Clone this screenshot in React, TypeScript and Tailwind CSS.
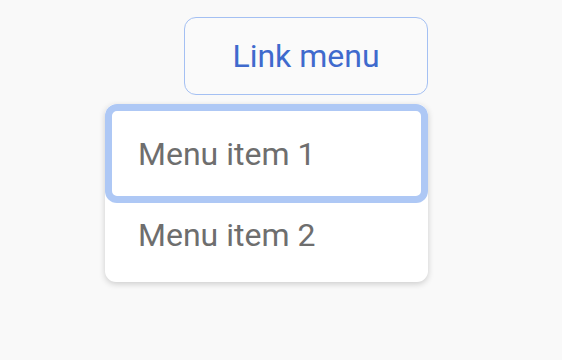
export default function App() {
  return (
    <div className="h-screen w-full bg-[#f9f9f9] pt-[17px] pl-[105px]" style={{ fontFamily: 'Roboto, "Liberation Sans", sans-serif' }}>
      <div className="flex w-[323px] flex-col items-end">
        {/* Trigger */}
        <button className="flex h-[78px] w-[244px] items-center justify-center rounded-[12px] border border-[#a4c0f3] bg-[#fafafa] text-[32px] text-[#3f6acd]">
          Link menu
        </button>

        {/* Menu */}
        <div className="mt-[9px] flex w-full flex-col rounded-[11px] bg-white pb-[15px] shadow-[0_2px_6px_rgba(0,0,0,0.18)]">
          <div className="flex h-[99px] items-center rounded-[12px] pl-[33px] text-[32px] text-[#6e6e6e] shadow-[inset_0_0_0_7px_#aec8f5]">
            Menu item 1
          </div>
          <div className="flex h-[64px] items-center pl-[33px] text-[32px] text-[#6e6e6e]">
            Menu item 2
          </div>
        </div>
      </div>
    </div>
  )
}
